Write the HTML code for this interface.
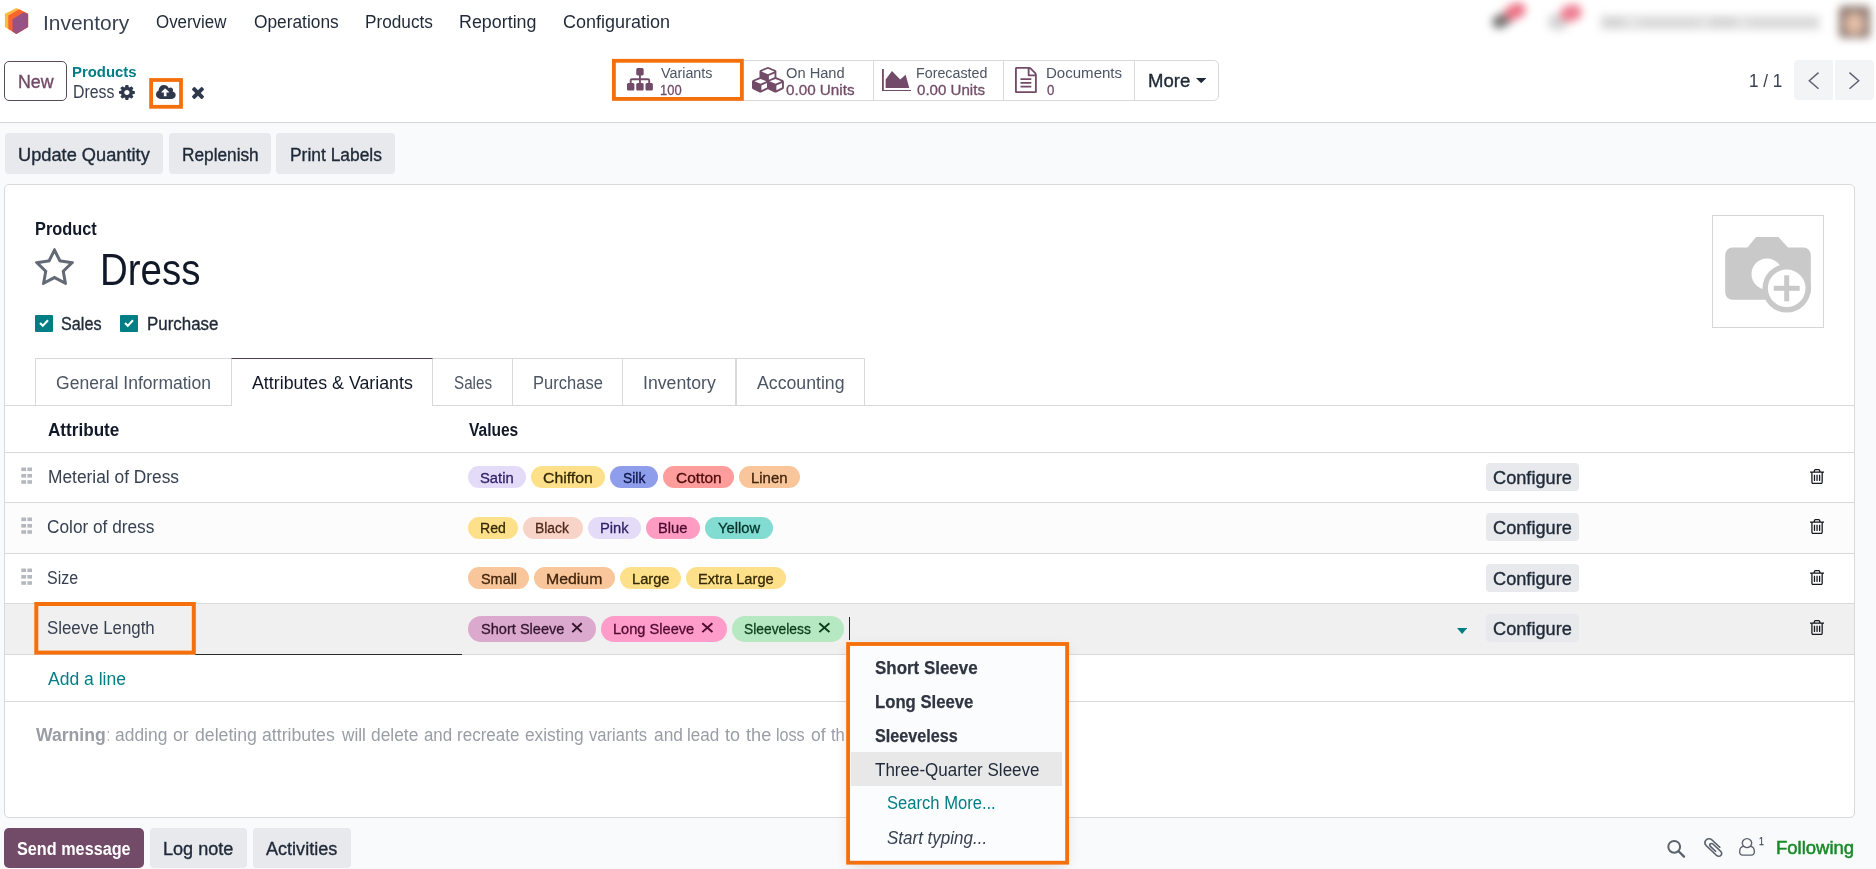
<!DOCTYPE html>
<html lang="en">
<head>
<meta charset="utf-8">
<title>Dress - Odoo</title>
<style>
*{box-sizing:border-box;margin:0;padding:0}
html,body{width:1876px;height:869px;overflow:hidden}
body{position:relative;background:#f9fafb;font-family:"Liberation Sans",sans-serif;color:#374151;font-size:17px}
.a{position:absolute}
.t{position:absolute;white-space:nowrap;line-height:1;transform-origin:0 0}
.btn{position:absolute;border-radius:4px;background:#e7e9ed}
.hl{position:absolute;border:4px solid #f0710c}
.hline{position:absolute;height:1px;background:#d9d9da}
.vline{position:absolute;width:1px;background:#d9d9da}
.tab{position:absolute;top:358px;height:48px;border:1px solid #d9d9da;background:#fff}
.tag{position:absolute;border-radius:13px}
.cfg{position:absolute;left:1486px;width:93px;height:28px;border-radius:4px;background:#e7e9ed}
.dh{position:absolute;left:20.5px;width:11.5px;height:17px}
.trash{position:absolute;left:1810px;width:14px;height:15px}
</style>
</head>
<body>
<!-- top white area: navbar + control panel -->
<div class="a" style="left:0;top:0;width:1876px;height:122px;background:#fff"></div>
<div class="hline" style="left:0;top:122px;width:1876px;background:#d5d8dc"></div>

<!-- app logo -->
<svg class="a" style="left:4px;top:7px" width="26" height="29" viewBox="4 7 26 29">
  <polygon points="16.400,7.900 4.900,13.800 4.900,27.100 16.400,33.900 28.100,27.100 28.100,13.800" fill="#fbb945"/>
  <polygon points="8.300,15.400 19.200,9.300 28.100,13.800 28.100,27.100 16.400,33.900 8.300,29.100" fill="#f9662d"/>
  <polygon points="12.500,19.200 23.700,12.200 28.100,14.300 28.100,27.100 16.400,33.900 12.500,31.600" fill="#985184"/>
</svg>


<!-- control panel: New button -->
<div class="a" style="left:4px;top:61px;width:63px;height:40px;border:1px solid #5c4b57;border-radius:5px;background:#fff"></div>

<!-- stat buttons frame -->
<div class="a" style="left:612px;top:60px;width:607px;height:41px;border:1px solid #d9d9da;border-radius:5px;background:#fff"></div>
<div class="vline" style="left:873px;top:61px;height:39px"></div>
<div class="vline" style="left:1003px;top:61px;height:39px"></div>
<div class="vline" style="left:1134px;top:61px;height:39px"></div>

<!-- pager buttons -->
<div class="a" style="left:1794px;top:60px;width:39px;height:40px;background:#f3f4f6;border-radius:4px 0 0 4px"></div>
<div class="a" style="left:1835px;top:60px;width:39px;height:40px;background:#f3f4f6;border-radius:0 4px 4px 0"></div>

<!-- action buttons -->
<div class="btn" style="left:5px;top:133px;width:158px;height:41px"></div>
<div class="btn" style="left:169px;top:133px;width:102px;height:41px"></div>
<div class="btn" style="left:276px;top:133px;width:119px;height:41px"></div>

<!-- sheet -->
<div class="a" style="left:4px;top:184px;width:1851px;height:634px;background:#fff;border:1px solid #d9d9da;border-radius:5px"></div>

<!-- image placeholder -->
<div class="a" style="left:1712px;top:215px;width:112px;height:113px;border:1px solid #d6d6d6;background:#fff"></div>

<!-- checkboxes -->
<div class="a" style="left:35px;top:315px;width:18px;height:17px;background:#017e84;border-radius:1px"></div>
<div class="a" style="left:120px;top:315px;width:18px;height:17px;background:#017e84;border-radius:1px"></div>

<!-- notebook tabs -->
<div class="hline" style="left:5px;top:405px;width:1849px"></div>
<div class="tab" style="left:35px;width:197px"></div>
<div class="tab" style="left:432px;width:81px"></div>
<div class="tab" style="left:512px;width:111px"></div>
<div class="tab" style="left:622px;width:114px"></div>
<div class="tab" style="left:736px;width:129px"></div>
<div class="tab" style="left:231px;width:202px;height:48px;border-top:1.5px solid #4f3c4a;border-bottom:none"></div>

<!-- list rows -->
<div class="a" style="left:5px;top:503px;width:1849px;height:50px;background:#fcfcfc"></div>
<div class="a" style="left:5px;top:604px;width:1849px;height:50px;background:#f0f0f0"></div>
<div class="hline" style="left:5px;top:452px;width:1849px"></div>
<div class="hline" style="left:5px;top:502px;width:1849px"></div>
<div class="hline" style="left:5px;top:553px;width:1849px"></div>
<div class="hline" style="left:5px;top:603px;width:1849px"></div>
<div class="hline" style="left:5px;top:654px;width:1849px"></div>
<div class="hline" style="left:5px;top:701px;width:1849px"></div>
<div class="a" style="left:195px;top:654px;width:267px;height:1px;background:#2b2b2b"></div>

<!-- tags -->
<div class="tag" style="left:468px;top:466px;width:58px;height:22px;background:#e4dbf9"></div>
<div class="tag" style="left:531px;top:466px;width:74px;height:22px;background:#ffe08a"></div>
<div class="tag" style="left:610px;top:466px;width:48px;height:22px;background:#8f9eea"></div>
<div class="tag" style="left:663px;top:466px;width:71px;height:22px;background:#ff9c9c"></div>
<div class="tag" style="left:739px;top:466px;width:61px;height:22px;background:#f8c69a"></div>

<div class="tag" style="left:468px;top:517px;width:50px;height:22px;background:#ffe08a"></div>
<div class="tag" style="left:523px;top:517px;width:60px;height:22px;background:#f8d3c7"></div>
<div class="tag" style="left:588px;top:517px;width:53px;height:22px;background:#e4dbf9"></div>
<div class="tag" style="left:646px;top:517px;width:54px;height:22px;background:#ff9cc1"></div>
<div class="tag" style="left:705px;top:517px;width:68px;height:22px;background:#82dcd2"></div>

<div class="tag" style="left:468px;top:567px;width:61px;height:22px;background:#f8c69a"></div>
<div class="tag" style="left:534px;top:567px;width:81px;height:22px;background:#f8c69a"></div>
<div class="tag" style="left:620px;top:567px;width:61px;height:22px;background:#ffe08a"></div>
<div class="tag" style="left:686px;top:567px;width:100px;height:22px;background:#ffe08a"></div>

<div class="tag" style="left:468px;top:616px;width:128px;height:26px;background:#dba9cd"></div>
<div class="tag" style="left:601px;top:616px;width:126px;height:26px;background:#ff9cc9"></div>
<div class="tag" style="left:732px;top:616px;width:112px;height:26px;background:#b6e8c1"></div>
<div class="a" style="left:849px;top:617px;width:1px;height:23px;background:#222"></div>

<!-- configure buttons -->
<div class="cfg" style="top:463px"></div>
<div class="cfg" style="top:513px"></div>
<div class="cfg" style="top:564px"></div>
<div class="cfg" style="top:614px;background:#e8e9ec"></div>

<!-- chatter buttons -->
<div class="a" style="left:4px;top:828px;width:140px;height:40px;background:#714b67;border-radius:5px"></div>
<div class="btn" style="left:150px;top:828px;width:97px;height:40px"></div>
<div class="btn" style="left:253px;top:828px;width:98px;height:40px"></div>


<svg class="a" style="left:119.10px;top:85.00px" width="15.80" height="14.90" viewBox="128 128 1536 1536" preserveAspectRatio="none" fill="#2e394c"><path d="M1152 896q0-106-75-181t-181-75-181 75-75 181 75 181 181 75 181-75 75-181zm512-109v222q0 12-8 23t-20 13l-185 28q-19 54-39 91 35 50 107 138 10 12 10 25t-9 23q-27 37-99 108t-94 71q-12 0-26-9l-138-108q-44 23-91 38-16 136-29 186-7 28-36 28h-222q-14 0-24.500-8.500t-11.500-21.500l-28-184q-49-16-90-37l-141 107q-10 9-25 9-14 0-25-11-126-114-165-168-7-10-7-23 0-12 8-23 15-21 51-66.500t54-70.500q-27-50-41-99l-183-27q-13-2-21-12.500t-8-23.500v-222q0-12 8-23t19-13l186-28q14-46 39-92-40-57-107-138-10-12-10-24 0-10 9-23 26-36 98.500-107.500t94.500-71.500q13 0 26 10l138 107q44-23 91-38 16-136 29-186 7-28 36-28h222q14 0 24.500 8.500t11.500 21.500l28 184q49 16 90 37l142-107q9-9 24-9 13 0 25 10 129 119 165 170 7 8 7 22 0 12-8 23-15 21-51 66.500t-54 70.500q26 50 41 98l183 28q13 2 21 12.500t8 23.500z"/></svg>
<svg class="a" style="left:156.30px;top:85.00px" width="19.70" height="13.90" viewBox="-64 128 1920 1408" preserveAspectRatio="none" fill="#2e394c"><path d="M1216 864q0-14-9-23l-352-352q-9-9-23-9t-23 9l-351 351q-10 12-10 24 0 14 9 23t23 9h224v352q0 13 9.500 22.500t22.500 9.500h192q13 0 22.500-9.500t9.500-22.500v-352h224q13 0 22.500-9.500t9.500-22.500zm640 288q0 159-112.500 271.500t-271.500 112.500h-1088q-185 0-316.500-131.500t-131.500-316.500q0-130 70-240t188-165q-2-30-2-43 0-212 150-362t362-150q156 0 285.500 87t188.500 231q71-62 166-62 106 0 181 75t75 181q0 76-41 138 130 31 213.500 135.500t83.500 238.500z"/></svg>
<svg class="a" style="left:192.40px;top:87.00px" width="12.00" height="12.00" viewBox="302 366 1188 1188" preserveAspectRatio="none" fill="#2e394c"><path d="M1490 1322q0 40-28 68l-136 136q-28 28-68 28t-68-28l-294-294-294 294q-28 28-68 28t-68-28l-136-136q-28-28-28-68t28-68l294-294-294-294q-28-28-28-68t28-68l136-136q28-28 68-28t68 28l294 294 294-294q28-28 68-28t68 28l136 136q28 28 28 68t-28 68l-294 294 294 294q28 28 28 68z"/></svg>
<svg class="a" style="left:627.00px;top:68.40px" width="25.90" height="22.60" viewBox="0 128 1792 1536" preserveAspectRatio="none" fill="#714b67"><path d="M1792 1248v320q0 40-28 68t-68 28h-320q-40 0-68-28t-28-68v-320q0-40 28-68t68-28h96v-192h-512v192h96q40 0 68 28t28 68v320q0 40-28 68t-68 28h-320q-40 0-68-28t-28-68v-320q0-40 28-68t68-28h96v-192h-512v192h96q40 0 68 28t28 68v320q0 40-28 68t-68 28h-320q-40 0-68-28t-28-68v-320q0-40 28-68t68-28h96v-192q0-52 38-90t90-38h512v-192h-96q-40 0-68-28t-28-68v-320q0-40 28-68t68-28h320q40 0 68 28t28 68v320q0 40-28 68t-68 28h-96v192h512q52 0 90 38t38 90v192h96q40 0 68 28t28 68z"/></svg>
<svg class="a" style="left:752.30px;top:67.00px" width="31.90" height="25.60" viewBox="256 -3 2176 1792" preserveAspectRatio="none" fill="#714b67"><path d="M896 1629l384-192v-314l-384 164v342zm-64-454l404-173-404-173-404 173zm1088 454l384-192v-314l-384 164v342zm-64-454l404-173-404-173-404 173zm-448-293l384-165v-266l-384 164v267zm-64-379l441-189-441-189-441 189zm1088 518v416q0 36-19 67t-52 47l-448 224q-25 14-57 14t-57-14l-448-224q-4-2-7-4-2 2-7 4l-448 224q-25 14-57 14t-57-14l-448-224q-33-16-52-47t-19-67v-416q0-38 21.500-70t56.500-48l434-186v-400q0-38 21.500-70t56.500-48l448-192q23-10 50-10t50 10l448 192q35 16 56.500 48t21.500 70v400l434 186q36 16 57 48t21 70z"/></svg>
<svg class="a" style="left:881.90px;top:68.60px" width="29.10" height="22.90" viewBox="0 128 2048 1536" preserveAspectRatio="none" fill="#714b67"><path d="M2048 1536v128h-2048v-1536h128v1408h1920zm-384-1024l256 896h-1664v-576l448-576 576 576z"/></svg>
<svg class="a" style="left:1015.00px;top:66.90px" width="21.80" height="26.10" viewBox="128 0 1536 1792" preserveAspectRatio="none" fill="#714b67"><path d="M1596 380q28 28 48 76t20 88v1152q0 40-28 68t-68 28h-1344q-40 0-68-28t-28-68v-1600q0-40 28-68t68-28h896q40 0 88 20t76 48zm-444-244v376h376q-10-29-22-41l-313-313q-12-12-41-22zm384 1528v-1024h-416q-40 0-68-28t-28-68v-416h-768v1536h1280zm-1024-864q0-14 9-23t23-9h704q14 0 23 9t9 23v64q0 14-9 23t-23 9h-704q-14 0-23-9t-9-23v-64zm736 224q14 0 23 9t9 23v64q0 14-9 23t-23 9h-704q-14 0-23-9t-9-23v-64q0-14 9-23t23-9h704zm0 256q14 0 23 9t9 23v64q0 14-9 23t-23 9h-704q-14 0-23-9t-9-23v-64q0-14 9-23t23-9h704z"/></svg>
<svg class="a" style="left:35.00px;top:248.00px" width="39.00" height="37.00" viewBox="64 32 1664 1587" preserveAspectRatio="none" fill="#636a76"><path d="M1201 1004l306-297-422-62-189-382-189 382-422 62 306 297-73 421 378-199 377 199zm527-357q0 22-26 48l-363 354 86 500q1 7 1 20 0 50-41 50-19 0-40-12l-449-236-449 236q-22 12-40 12-21 0-31.500-14.500t-10.500-35.500q0-6 2-20l86-500-364-354q-25-27-25-48 0-37 56-46l502-73 225-455q19-41 49-41t49 41l225 455 502 73q56 9 56 46z"/></svg>
<svg class="a" style="left:1809.90px;top:469.00px" width="14.10" height="15.00" viewBox="192 128 1408 1536" preserveAspectRatio="none" fill="#15181d"><path d="M704 736v576q0 14-9 23t-23 9h-64q-14 0-23-9t-9-23v-576q0-14 9-23t23-9h64q14 0 23 9t9 23zm256 0v576q0 14-9 23t-23 9h-64q-14 0-23-9t-9-23v-576q0-14 9-23t23-9h64q14 0 23 9t9 23zm256 0v576q0 14-9 23t-23 9h-64q-14 0-23-9t-9-23v-576q0-14 9-23t23-9h64q14 0 23 9t9 23zm128 724v-948h-896v948q0 22 7 40.500t14.500 27 10.500 8.500h832q3 0 10.500-8.500t14.500-27 7-40.500zm-672-1076h448l-48-117q-7-9-17-11h-317q-10 2-17 11zm928 32v64q0 14-9 23t-23 9h-96v948q0 83-47 143.500t-113 60.500h-832q-66 0-113-58.500t-47-141.500v-952h-96q-14 0-23-9t-9-23v-64q0-14 9-23t23-9h309l70-167q15-37 54-63t79-26h320q40 0 79 26t54 63l70 167h309q14 0 23 9t9 23z"/></svg>
<svg class="a" style="left:1809.90px;top:519.00px" width="14.10" height="15.00" viewBox="192 128 1408 1536" preserveAspectRatio="none" fill="#15181d"><path d="M704 736v576q0 14-9 23t-23 9h-64q-14 0-23-9t-9-23v-576q0-14 9-23t23-9h64q14 0 23 9t9 23zm256 0v576q0 14-9 23t-23 9h-64q-14 0-23-9t-9-23v-576q0-14 9-23t23-9h64q14 0 23 9t9 23zm256 0v576q0 14-9 23t-23 9h-64q-14 0-23-9t-9-23v-576q0-14 9-23t23-9h64q14 0 23 9t9 23zm128 724v-948h-896v948q0 22 7 40.500t14.500 27 10.500 8.500h832q3 0 10.500-8.500t14.500-27 7-40.500zm-672-1076h448l-48-117q-7-9-17-11h-317q-10 2-17 11zm928 32v64q0 14-9 23t-23 9h-96v948q0 83-47 143.500t-113 60.500h-832q-66 0-113-58.500t-47-141.500v-952h-96q-14 0-23-9t-9-23v-64q0-14 9-23t23-9h309l70-167q15-37 54-63t79-26h320q40 0 79 26t54 63l70 167h309q14 0 23 9t9 23z"/></svg>
<svg class="a" style="left:1809.90px;top:570.00px" width="14.10" height="15.00" viewBox="192 128 1408 1536" preserveAspectRatio="none" fill="#15181d"><path d="M704 736v576q0 14-9 23t-23 9h-64q-14 0-23-9t-9-23v-576q0-14 9-23t23-9h64q14 0 23 9t9 23zm256 0v576q0 14-9 23t-23 9h-64q-14 0-23-9t-9-23v-576q0-14 9-23t23-9h64q14 0 23 9t9 23zm256 0v576q0 14-9 23t-23 9h-64q-14 0-23-9t-9-23v-576q0-14 9-23t23-9h64q14 0 23 9t9 23zm128 724v-948h-896v948q0 22 7 40.500t14.500 27 10.500 8.500h832q3 0 10.500-8.500t14.500-27 7-40.500zm-672-1076h448l-48-117q-7-9-17-11h-317q-10 2-17 11zm928 32v64q0 14-9 23t-23 9h-96v948q0 83-47 143.500t-113 60.500h-832q-66 0-113-58.500t-47-141.500v-952h-96q-14 0-23-9t-9-23v-64q0-14 9-23t23-9h309l70-167q15-37 54-63t79-26h320q40 0 79 26t54 63l70 167h309q14 0 23 9t9 23z"/></svg>
<svg class="a" style="left:1809.90px;top:620.00px" width="14.10" height="15.00" viewBox="192 128 1408 1536" preserveAspectRatio="none" fill="#15181d"><path d="M704 736v576q0 14-9 23t-23 9h-64q-14 0-23-9t-9-23v-576q0-14 9-23t23-9h64q14 0 23 9t9 23zm256 0v576q0 14-9 23t-23 9h-64q-14 0-23-9t-9-23v-576q0-14 9-23t23-9h64q14 0 23 9t9 23zm256 0v576q0 14-9 23t-23 9h-64q-14 0-23-9t-9-23v-576q0-14 9-23t23-9h64q14 0 23 9t9 23zm128 724v-948h-896v948q0 22 7 40.500t14.500 27 10.500 8.500h832q3 0 10.500-8.500t14.500-27 7-40.500zm-672-1076h448l-48-117q-7-9-17-11h-317q-10 2-17 11zm928 32v64q0 14-9 23t-23 9h-96v948q0 83-47 143.500t-113 60.500h-832q-66 0-113-58.500t-47-141.500v-952h-96q-14 0-23-9t-9-23v-64q0-14 9-23t23-9h309l70-167q15-37 54-63t79-26h320q40 0 79 26t54 63l70 167h309q14 0 23 9t9 23z"/></svg>
<svg class="a" style="left:1666px;top:838px" width="22" height="22" viewBox="1666 838 22 22" fill="none" stroke="#5b616b" stroke-width="2"><circle cx="1674.2" cy="846.8" r="5.9"/><path d="M1678.6,851.2 L1684,856.6" stroke-width="2.3" stroke-linecap="round"/></svg>
<svg class="a" style="left:1704.00px;top:838.00px" width="18.50" height="19.00" viewBox="196 132 1400 1528" preserveAspectRatio="none" fill="#5b616b"><path d="M1596 1385q0 117-79 196t-196 79q-135 0-235-100l-777-776q-113-115-113-271 0-159 110-270t269-111q158 0 273 113l605 606q10 10 10 22 0 16-30.500 46.500t-46.500 30.500q-13 0-23-10l-606-607q-79-77-181-77-106 0-179 75t-73 181q0 105 76 181l776 777q63 63 145 63 64 0 106-42t42-106q0-82-63-145l-581-581q-26-24-60-24-29 0-48 19t-19 48q0 32 25 59l410 410q10 10 10 22 0 16-31 47t-47 31q-12 0-22-10l-410-410q-63-61-63-149 0-82 57-139t139-57q88 0 149 63l581 581q100 98 100 235z"/></svg>
<svg class="a" style="left:1739.00px;top:838.00px" width="16.00" height="17.80" viewBox="0 0 1536 1792" preserveAspectRatio="none" fill="#5b616b"><path d="M1201 784q47 14 89.500 38t89 73 79.500 115.500 55 172 22 236.500q0 154-100 263.500t-241 109.500h-854q-141 0-241-109.500t-100-263.500q0-131 22-236.500t55-172 79.500-115.500 89-73 89.500-38q-79-125-79-272 0-104 40.500-198.500t109.500-163.500 163.500-109.500 198.500-40.500 198.500 40.500 163.500 109.500 109.500 163.500 40.500 198.500q0 147-79 272zm-433-656q-159 0-271.500 112.500t-112.500 271.500 112.500 271.500 271.500 112.500 271.500-112.500 112.500-271.500-112.500-271.500-271.500-112.500zm427 1536q88 0 150.500-71.500t62.500-173.500q0-239-78.500-377t-225.500-145q-145 127-336 127t-336-127q-147 7-225.500 145t-78.500 377q0 102 62.500 173.500t150.500 71.500h854z"/></svg>
<svg class="a" style="left:1805px;top:70px" width="18" height="22" viewBox="0 0 18 22" fill="none" stroke="#5d6470" stroke-width="1.5"><polyline points="13.5,2.6 4.3,10.7 13.5,18.8"/></svg>
<svg class="a" style="left:1845px;top:70px" width="18" height="22" viewBox="0 0 18 22" fill="none" stroke="#5d6470" stroke-width="1.5"><polyline points="4.5,2.6 13.7,10.7 4.5,18.8"/></svg>
<svg class="a" style="left:1196px;top:78px" width="10.4" height="5.2" viewBox="0 0 10 5"><polygon points="0,0 10,0 5,5" fill="#1f2937"/></svg>
<svg class="a" style="left:1456.8px;top:628px" width="10.2" height="6" viewBox="0 0 10 5.5" preserveAspectRatio="none"><polygon points="0,0 10,0 5,5.5" fill="#017e84"/></svg>
<svg class="a" style="left:35px;top:315px" width="18" height="17" viewBox="0 0 18 17" fill="none" stroke="#fff" stroke-width="2"><polyline points="5,8 7.800,10.800 13,5.300"/></svg>
<svg class="a" style="left:120px;top:315px" width="18" height="17" viewBox="0 0 18 17" fill="none" stroke="#fff" stroke-width="2"><polyline points="5,8 7.800,10.800 13,5.300"/></svg>
<svg class="a" style="left:571.3px;top:622.4px" width="12.0" height="11.399999999999977" fill="none" stroke="#33152f" stroke-width="1.9"><path d="M1.3,1.3 L10.7,10.099999999999977 M10.7,1.3 L1.3,10.099999999999977"/></svg>
<svg class="a" style="left:700.8px;top:622.4px" width="12.700000000000045" height="11.399999999999977" fill="none" stroke="#4d0a31" stroke-width="1.9"><path d="M1.3,1.3 L11.400000000000045,10.099999999999977 M11.400000000000045,1.3 L1.3,10.099999999999977"/></svg>
<svg class="a" style="left:817.8px;top:622.4px" width="12.700000000000045" height="11.399999999999977" fill="none" stroke="#0a3d1a" stroke-width="1.9"><path d="M1.3,1.3 L11.400000000000045,10.099999999999977 M11.400000000000045,1.3 L1.3,10.099999999999977"/></svg>
<svg class="a" style="left:20.5px;top:467px" width="11.5" height="17" fill="#b4b7bd"><rect x="0.3" y="0.5" width="4.8" height="3.6"/><rect x="0.3" y="7" width="4.8" height="3.6"/><rect x="0.3" y="13.2" width="4.8" height="3.6"/><rect x="6.4" y="0.5" width="4.8" height="3.6"/><rect x="6.4" y="7" width="4.8" height="3.6"/><rect x="6.4" y="13.2" width="4.8" height="3.6"/></svg>
<svg class="a" style="left:20.5px;top:517px" width="11.5" height="17" fill="#b4b7bd"><rect x="0.3" y="0.5" width="4.8" height="3.6"/><rect x="0.3" y="7" width="4.8" height="3.6"/><rect x="0.3" y="13.2" width="4.8" height="3.6"/><rect x="6.4" y="0.5" width="4.8" height="3.6"/><rect x="6.4" y="7" width="4.8" height="3.6"/><rect x="6.4" y="13.2" width="4.8" height="3.6"/></svg>
<svg class="a" style="left:20.5px;top:568px" width="11.5" height="17" fill="#b4b7bd"><rect x="0.3" y="0.5" width="4.8" height="3.6"/><rect x="0.3" y="7" width="4.8" height="3.6"/><rect x="0.3" y="13.2" width="4.8" height="3.6"/><rect x="6.4" y="0.5" width="4.8" height="3.6"/><rect x="6.4" y="7" width="4.8" height="3.6"/><rect x="6.4" y="13.2" width="4.8" height="3.6"/></svg>
<svg class="a" style="left:1713px;top:216px" width="110" height="111" viewBox="1713 216 110 111">
<path d="M1732.5,247.5 h15 l8.500,-10.500 h22.400 l9.600,10.500 h15.500 a7.300,7.300 0 0 1 7.300,7.300 v36 a9,9 0 0 1 -9,9 h-69.300 a7.300,7.300 0 0 1 -7.300,-7.300 v-37.700 a7.300,7.300 0 0 1 7.300,-7.300 z" fill="#c9c9c9"/>
<circle cx="1767" cy="274" r="15.500" fill="#fff"/>
<circle cx="1786.700" cy="288.300" r="24.200" fill="#c9c9c9"/>
<circle cx="1786.700" cy="288.300" r="18.800" fill="#fff"/>
<rect x="1773.700" y="285.800" width="26" height="5" fill="#c9c9c9"/>
<rect x="1784.200" y="275.300" width="5" height="26" fill="#c9c9c9"/>
</svg>
<div class="a" style="left:1470px;top:0;width:406px;height:50px;overflow:hidden">
<div class="a" style="left:0;top:0;width:406px;height:50px;filter:blur(4.5px)">
<div class="a" style="left:22px;top:14px;width:20px;height:13px;background:#747474;border-radius:6px;transform:rotate(-25deg)"></div>
<div class="a" style="left:34px;top:4px;width:22px;height:15px;background:#ec7286;border-radius:8px;transform:rotate(-25deg)"></div>
<div class="a" style="left:78px;top:14px;width:20px;height:16px;background:#d4d4d6;border-radius:8px"></div>
<div class="a" style="left:90px;top:5px;width:22px;height:16px;background:#ef7d90;border-radius:8px;transform:rotate(-15deg)"></div>
<div class="a" style="left:130px;top:15px;width:220px;height:15px;background:#e4e4e4"></div>
<div class="a" style="left:134px;top:18px;width:20px;height:9px;background:#d2d2d2"></div>
<div class="a" style="left:170px;top:19px;width:60px;height:8px;background:#d8d8d8"></div>
<div class="a" style="left:240px;top:18px;width:26px;height:9px;background:#d4d4d4"></div>
<div class="a" style="left:278px;top:19px;width:70px;height:8px;background:#d8d8d8"></div>
<div class="a" style="left:369px;top:6px;width:31px;height:32px;background:#8f7a72;border-radius:4px"></div>
<div class="a" style="left:375px;top:13px;width:19px;height:21px;background:#e2bda6;border-radius:7px"></div>
</div></div>

<div class="a" style="left:849px;top:645px;width:217px;height:217px;background:#fbfcfd;box-shadow:0 4px 14px rgba(0,0,0,.13)"></div>
<div class="a" style="left:851px;top:752px;width:211px;height:34px;background:#e8e8e9"></div>

<div class="t" style="left:42.68px;top:13px;font-size:20.5px;color:#374151;transform:scaleX(1.0217);">Inventory</div>
<div class="t" style="left:156.30px;top:14px;font-size:17.5px;color:#1f2937;transform:scaleX(0.9646);">Overview</div>
<div class="t" style="left:253.70px;top:14px;font-size:17.5px;color:#1f2937;transform:scaleX(0.9889);">Operations</div>
<div class="t" style="left:364.82px;top:14px;font-size:17.5px;color:#1f2937;transform:scaleX(0.9837);">Products</div>
<div class="t" style="left:459.28px;top:14px;font-size:17.5px;color:#1f2937;transform:scaleX(1.0210);">Reporting</div>
<div class="t" style="left:562.70px;top:14px;font-size:17.5px;color:#1f2937;transform:scaleX(1.0284);">Configuration</div>
<div class="t" style="left:17.58px;top:74px;font-size:17.5px;color:#714b67;transform:scaleX(1.0183);-webkit-text-stroke:0.35px #714b67;">New</div>
<div class="t" style="left:72.31px;top:64px;font-size:15px;color:#017e84;transform:scaleX(0.9927);font-weight:bold;">Products</div>
<div class="t" style="left:72.89px;top:84px;font-size:17.5px;color:#374151;transform:scaleX(0.9077);">Dress</div>
<div class="t" style="left:660.90px;top:66px;font-size:14.7px;color:#4b5563;transform:scaleX(0.9743);">Variants</div>
<div class="t" style="left:660.32px;top:83px;font-size:14.7px;color:#714b67;transform:scaleX(0.8827);-webkit-text-stroke:0.3px #714b67;">100</div>
<div class="t" style="left:786.30px;top:66px;font-size:14.7px;color:#4b5563;transform:scaleX(0.9980);">On Hand</div>
<div class="t" style="left:786.30px;top:83px;font-size:14.7px;color:#714b67;transform:scaleX(1.0367);-webkit-text-stroke:0.3px #714b67;">0.00 Units</div>
<div class="t" style="left:916.03px;top:66px;font-size:14.7px;color:#4b5563;transform:scaleX(0.9709);">Forecasted</div>
<div class="t" style="left:917.00px;top:83px;font-size:14.7px;color:#714b67;transform:scaleX(1.0276);-webkit-text-stroke:0.3px #714b67;">0.00 Units</div>
<div class="t" style="left:1045.58px;top:66px;font-size:14.7px;color:#4b5563;transform:scaleX(1.0241);">Documents</div>
<div class="t" style="left:1046.80px;top:83px;font-size:14.7px;color:#714b67;transform:scaleX(0.9000);-webkit-text-stroke:0.3px #714b67;">0</div>
<div class="t" style="left:1147.54px;top:73px;font-size:17.5px;color:#1f2937;transform:scaleX(1.0593);-webkit-text-stroke:0.35px #1f2937;">More</div>
<div class="t" style="left:1749.13px;top:73px;font-size:17.5px;color:#374151;transform:scaleX(0.9747);">1 / 1</div>
<div class="t" style="left:17.96px;top:147px;font-size:17.5px;color:#1f2937;transform:scaleX(1.0420);-webkit-text-stroke:0.35px #1f2937;">Update Quantity</div>
<div class="t" style="left:181.61px;top:147px;font-size:17.5px;color:#1f2937;transform:scaleX(0.9856);-webkit-text-stroke:0.35px #1f2937;">Replenish</div>
<div class="t" style="left:290.41px;top:147px;font-size:17.5px;color:#1f2937;transform:scaleX(0.9949);-webkit-text-stroke:0.35px #1f2937;">Print Labels</div>
<div class="t" style="left:35.17px;top:221px;font-size:17.5px;color:#111827;transform:scaleX(0.9328);font-weight:bold;">Product</div>
<div class="t" style="left:99.66px;top:249px;font-size:43.6px;color:#111827;transform:scaleX(0.8815);">Dress</div>
<div class="t" style="left:61.20px;top:316px;font-size:17.5px;color:#1f2937;transform:scaleX(0.9245);-webkit-text-stroke:0.35px #1f2937;">Sales</div>
<div class="t" style="left:146.63px;top:316px;font-size:17.5px;color:#1f2937;transform:scaleX(0.9654);-webkit-text-stroke:0.35px #1f2937;">Purchase</div>
<div class="t" style="left:55.60px;top:375px;font-size:17.5px;color:#4b5563;transform:scaleX(1.0024);">General Information</div>
<div class="t" style="left:251.60px;top:375px;font-size:17.5px;color:#111827;transform:scaleX(1.0166);">Attributes &amp; Variants</div>
<div class="t" style="left:453.80px;top:375px;font-size:17.5px;color:#4b5563;transform:scaleX(0.8677);">Sales</div>
<div class="t" style="left:532.86px;top:375px;font-size:17.5px;color:#4b5563;transform:scaleX(0.9446);">Purchase</div>
<div class="t" style="left:642.79px;top:375px;font-size:17.5px;color:#4b5563;transform:scaleX(1.0108);">Inventory</div>
<div class="t" style="left:757.00px;top:375px;font-size:17.5px;color:#4b5563;transform:scaleX(1.0110);">Accounting</div>
<div class="t" style="left:47.60px;top:422px;font-size:17.5px;color:#111827;transform:scaleX(0.9785);font-weight:bold;">Attribute</div>
<div class="t" style="left:468.80px;top:422px;font-size:17.5px;color:#111827;transform:scaleX(0.8883);font-weight:bold;">Values</div>
<div class="t" style="left:47.71px;top:469px;font-size:17.5px;color:#374151;transform:scaleX(0.9908);">Meterial of Dress</div>
<div class="t" style="left:47.40px;top:519px;font-size:17.5px;color:#374151;transform:scaleX(0.9855);">Color of dress</div>
<div class="t" style="left:47.30px;top:570px;font-size:17.5px;color:#374151;transform:scaleX(0.9126);">Size</div>
<div class="t" style="left:47.30px;top:620px;font-size:17.5px;color:#374151;transform:scaleX(0.9625);">Sleeve Length</div>
<div class="t" style="left:47.70px;top:671px;font-size:17.5px;color:#017e84;transform:scaleX(1.0026);">Add a line</div>
<div class="t" style="left:479.90px;top:471px;font-size:14.7px;color:#2f1f66;transform:scaleX(1.0057);-webkit-text-stroke:0.3px #2f1f66;">Satin</div>
<div class="t" style="left:543.20px;top:471px;font-size:14.7px;color:#332900;transform:scaleX(1.0780);-webkit-text-stroke:0.3px #332900;">Chiffon</div>
<div class="t" style="left:622.50px;top:471px;font-size:14.7px;color:#0b1348;transform:scaleX(0.9456);-webkit-text-stroke:0.3px #0b1348;">Silk</div>
<div class="t" style="left:675.80px;top:471px;font-size:14.7px;color:#4d0b0b;transform:scaleX(1.0556);-webkit-text-stroke:0.3px #4d0b0b;">Cotton</div>
<div class="t" style="left:751.18px;top:471px;font-size:14.7px;color:#40230a;transform:scaleX(1.0153);-webkit-text-stroke:0.3px #40230a;">Linen</div>
<div class="t" style="left:479.84px;top:521px;font-size:14.7px;color:#332900;transform:scaleX(0.9583);-webkit-text-stroke:0.3px #332900;">Red</div>
<div class="t" style="left:535.35px;top:521px;font-size:14.7px;color:#4f2a1c;transform:scaleX(0.9474);-webkit-text-stroke:0.3px #4f2a1c;">Black</div>
<div class="t" style="left:599.50px;top:521px;font-size:14.7px;color:#2f1f66;transform:scaleX(1.0025);-webkit-text-stroke:0.3px #2f1f66;">Pink</div>
<div class="t" style="left:658.30px;top:521px;font-size:14.7px;color:#4d0a31;transform:scaleX(0.9990);-webkit-text-stroke:0.3px #4d0a31;">Blue</div>
<div class="t" style="left:717.50px;top:521px;font-size:14.7px;color:#00332b;transform:scaleX(1.0045);-webkit-text-stroke:0.3px #00332b;">Yellow</div>
<div class="t" style="left:480.50px;top:572px;font-size:14.7px;color:#40230a;transform:scaleX(0.9818);-webkit-text-stroke:0.3px #40230a;">Small</div>
<div class="t" style="left:545.92px;top:572px;font-size:14.7px;color:#40230a;transform:scaleX(1.0784);-webkit-text-stroke:0.3px #40230a;">Medium</div>
<div class="t" style="left:631.50px;top:572px;font-size:14.7px;color:#332900;transform:scaleX(0.9973);-webkit-text-stroke:0.3px #332900;">Large</div>
<div class="t" style="left:698.30px;top:572px;font-size:14.7px;color:#332900;transform:scaleX(0.9966);-webkit-text-stroke:0.3px #332900;">Extra Large</div>
<div class="t" style="left:480.50px;top:622px;font-size:14.7px;color:#33152f;transform:scaleX(0.9925);-webkit-text-stroke:0.3px #33152f;">Short Sleeve</div>
<div class="t" style="left:613.31px;top:622px;font-size:14.7px;color:#4d0a31;transform:scaleX(0.9939);-webkit-text-stroke:0.3px #4d0a31;">Long Sleeve</div>
<div class="t" style="left:744.30px;top:622px;font-size:14.7px;color:#0a3d1a;transform:scaleX(0.9408);-webkit-text-stroke:0.3px #0a3d1a;">Sleeveless</div>
<div class="t" style="left:1493.30px;top:470px;font-size:17.5px;color:#1f2937;transform:scaleX(1.0393);-webkit-text-stroke:0.35px #1f2937;">Configure</div>
<div class="t" style="left:1493.30px;top:520px;font-size:17.5px;color:#1f2937;transform:scaleX(1.0393);-webkit-text-stroke:0.35px #1f2937;">Configure</div>
<div class="t" style="left:1493.30px;top:571px;font-size:17.5px;color:#1f2937;transform:scaleX(1.0393);-webkit-text-stroke:0.35px #1f2937;">Configure</div>
<div class="t" style="left:1493.30px;top:621px;font-size:17.5px;color:#1f2937;transform:scaleX(1.0393);-webkit-text-stroke:0.35px #1f2937;">Configure</div>
<div class="t" style="left:35.50px;top:727px;font-size:17.5px;color:#9a9da5;transform:scaleX(1.0051);font-weight:bold;">Warning</div>
<div class="t" style="left:106.67px;top:727px;font-size:17.5px;color:#9a9da5;transform:scaleX(0.5333);">: </div>
<div class="t" style="left:115.20px;top:727px;font-size:17.5px;color:#9a9da5;transform:scaleX(0.9958);">adding </div>
<div class="t" style="left:173.30px;top:727px;font-size:17.5px;color:#9a9da5;transform:scaleX(1.0043);">or </div>
<div class="t" style="left:194.80px;top:727px;font-size:17.5px;color:#9a9da5;transform:scaleX(1.0104);">deleting </div>
<div class="t" style="left:262.00px;top:727px;font-size:17.5px;color:#9a9da5;transform:scaleX(1.0106);">attributes </div>
<div class="t" style="left:341.98px;top:727px;font-size:17.5px;color:#9a9da5;transform:scaleX(0.9830);">will </div>
<div class="t" style="left:371.40px;top:727px;font-size:17.5px;color:#9a9da5;transform:scaleX(0.9926);">delete </div>
<div class="t" style="left:424.00px;top:727px;font-size:17.5px;color:#9a9da5;transform:scaleX(0.9626);">and </div>
<div class="t" style="left:456.93px;top:727px;font-size:17.5px;color:#9a9da5;transform:scaleX(0.9733);">recreate </div>
<div class="t" style="left:525.20px;top:727px;font-size:17.5px;color:#9a9da5;transform:scaleX(0.9880);">existing </div>
<div class="t" style="left:589.30px;top:727px;font-size:17.5px;color:#9a9da5;transform:scaleX(0.9476);">variants </div>
<div class="t" style="left:653.70px;top:727px;font-size:17.5px;color:#9a9da5;transform:scaleX(0.9907);">and </div>
<div class="t" style="left:687.02px;top:727px;font-size:17.5px;color:#9a9da5;transform:scaleX(0.9760);">lead </div>
<div class="t" style="left:725.20px;top:727px;font-size:17.5px;color:#9a9da5;transform:scaleX(1.0244);">to </div>
<div class="t" style="left:745.50px;top:727px;font-size:17.5px;color:#9a9da5;transform:scaleX(1.0384);">the </div>
<div class="t" style="left:775.58px;top:727px;font-size:17.5px;color:#9a9da5;transform:scaleX(0.9219);">loss </div>
<div class="t" style="left:811.00px;top:727px;font-size:17.5px;color:#9a9da5;transform:scaleX(0.9978);">of </div>
<div class="t" style="left:831.20px;top:727px;font-size:17.5px;color:#9a9da5;transform:scaleX(0.9450);">th </div>
<div class="t" style="left:17.20px;top:841px;font-size:17.5px;color:#ffffff;transform:scaleX(0.9273);font-weight:bold;">Send message</div>
<div class="t" style="left:163.17px;top:841px;font-size:17.5px;color:#1f2937;transform:scaleX(1.0318);-webkit-text-stroke:0.35px #1f2937;">Log note</div>
<div class="t" style="left:265.80px;top:841px;font-size:17.5px;color:#1f2937;transform:scaleX(1.0319);-webkit-text-stroke:0.35px #1f2937;">Activities</div>
<div class="t" style="left:1759.40px;top:836px;font-size:10.5px;color:#3f4651;transform:scaleX(0.8333);-webkit-text-stroke:0.25px #3f4651;">1</div>
<div class="t" style="left:1775.84px;top:840px;font-size:17.5px;color:#188a28;transform:scaleX(1.0569);-webkit-text-stroke:0.5px #188a28;">Following</div>
<div class="t" style="left:874.80px;top:659px;font-size:18.2px;color:#2f3541;transform:scaleX(0.9313);font-weight:bold;-webkit-text-stroke:0.25px #2f3541;">Short Sleeve</div>
<div class="t" style="left:874.58px;top:693px;font-size:18.2px;color:#2f3541;transform:scaleX(0.9177);font-weight:bold;-webkit-text-stroke:0.25px #2f3541;">Long Sleeve</div>
<div class="t" style="left:874.80px;top:727px;font-size:18.2px;color:#2f3541;transform:scaleX(0.8889);font-weight:bold;-webkit-text-stroke:0.25px #2f3541;">Sleeveless</div>
<div class="t" style="left:874.50px;top:762px;font-size:17.5px;color:#1f2937;transform:scaleX(0.9721);">Three-Quarter Sleeve</div>
<div class="t" style="left:887.30px;top:795px;font-size:17.5px;color:#017e84;transform:scaleX(0.9473);">Search More...</div>
<div class="t" style="left:887.30px;top:830px;font-size:17.5px;color:#374151;transform:scaleX(0.9710);font-style:italic;">Start typing...</div>

<svg class="a" style="left:148px;top:77px" width="37" height="34" viewBox="148 77 37 34"><rect x="151.1" y="80.0" width="29.900000000000016" height="26.800000000000008" fill="none" stroke="#f56f0a" stroke-width="3.8"/></svg>
<svg class="a" style="left:611px;top:57px" width="135" height="45" viewBox="611 57 135 45"><rect x="613.9" y="60.8" width="127.99999999999996" height="38.1" fill="none" stroke="#f56f0a" stroke-width="3.8"/></svg>
<svg class="a" style="left:33px;top:601px" width="165" height="56" viewBox="33 601 165 56"><rect x="36.3" y="604.0" width="157.5" height="48.60000000000002" fill="none" stroke="#f56f0a" stroke-width="4"/></svg>
<svg class="a" style="left:845px;top:641px" width="226" height="226" viewBox="845 641 226 226"><rect x="848.1" y="644.0" width="218.99999999999994" height="218.7" fill="none" stroke="#f56f0a" stroke-width="3.8"/></svg>
</body>
</html>
